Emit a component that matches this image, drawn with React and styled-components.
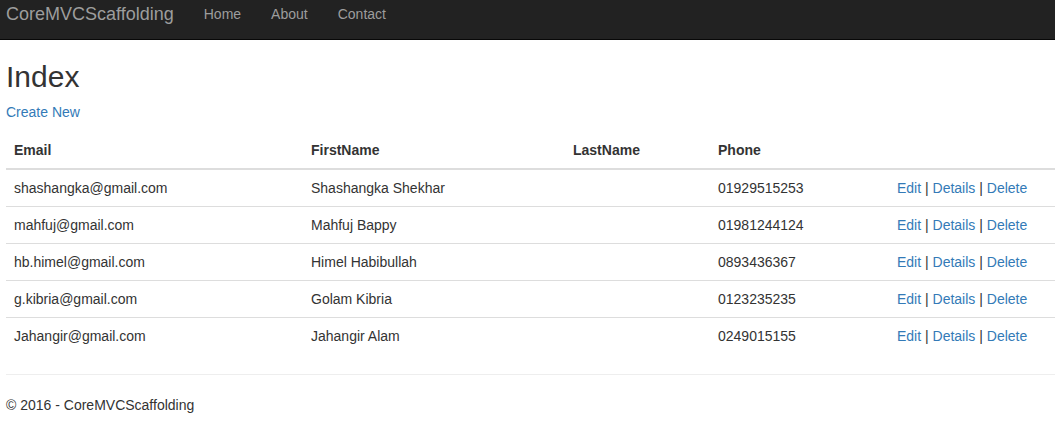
import styled, { createGlobalStyle } from "styled-components";

const GlobalStyle = createGlobalStyle`
    * { box-sizing: border-box; }
    html, body { margin: 0; padding: 0; }
    body {
        font-family: "Liberation Sans", Arial, Helvetica, sans-serif;
        font-size: 14px;
        line-height: 20px;
        color: #333333;
        background: #ffffff;
        overflow: hidden;
    }
`;

const people = [
    { email: "shashangka@gmail.com", first: "Shashangka Shekhar", last: "", phone: "01929515253" },
    { email: "mahfuj@gmail.com", first: "Mahfuj Bappy", last: "", phone: "01981244124" },
    { email: "hb.himel@gmail.com", first: "Himel Habibullah", last: "", phone: "0893436367" },
    { email: "g.kibria@gmail.com", first: "Golam Kibria", last: "", phone: "0123235235" },
    { email: "Jahangir@gmail.com", first: "Jahangir Alam", last: "", phone: "0249015155" },
];

export default function App() {
    return (
        <>
            <GlobalStyle />
            <Navbar>
                <Brand href="#">CoreMVCScaffolding</Brand>
                <NavLink href="#">Home</NavLink>
                <NavLink href="#">About</NavLink>
                <NavLink href="#">Contact</NavLink>
            </Navbar>
            <Content>
                <Title>Index</Title>
                <Para>
                    <Link href="#">Create New</Link>
                </Para>
                <Table>
                    <colgroup>
                        <col style={{ width: 297 }} />
                        <col style={{ width: 262 }} />
                        <col style={{ width: 145 }} />
                        <col style={{ width: 179 }} />
                        <col />
                    </colgroup>
                    <thead>
                        <tr>
                            <Th>Email</Th>
                            <Th>FirstName</Th>
                            <Th>LastName</Th>
                            <Th>Phone</Th>
                            <Th></Th>
                        </tr>
                    </thead>
                    <tbody>
                        {people.map((p) => (
                            <tr key={p.email}>
                                <Td>{p.email}</Td>
                                <Td>{p.first}</Td>
                                <Td>{p.last}</Td>
                                <Td>{p.phone}</Td>
                                <Td>
                                    <Link href="#">Edit</Link> | <Link href="#">Details</Link> |{" "}
                                    <Link href="#">Delete</Link>
                                </Td>
                            </tr>
                        ))}
                    </tbody>
                </Table>
                <Rule />
                <Footer>
                    <Para>&copy; 2016 - CoreMVCScaffolding</Para>
                </Footer>
            </Content>
        </>
    );
}

const Navbar = styled.nav`
    display: flex;
    align-items: flex-start;
    height: 40px;
    background-color: #222222;
    border-bottom: 1px solid #080808;
    padding-left: 6px;
`;

const Brand = styled.a`
    font-size: 18px;
    line-height: 20px;
    color: #9d9d9d;
    text-decoration: none;
    padding: 4px 15px 0 0;
`;

const NavLink = styled.a`
    font-size: 14px;
    line-height: 20px;
    color: #9d9d9d;
    text-decoration: none;
    padding: 4px 15px 0 15px;
`;

const Content = styled.div`
    padding-left: 6px;
`;

const Title = styled.h2`
    font-size: 30px;
    font-weight: 500;
    line-height: 1.1;
    margin: 20px 0 9px 0;
`;

const Para = styled.p`
    margin: 0 0 10px 0;
`;

const Link = styled.a`
    color: #337ab7;
    text-decoration: none;
`;

const Table = styled.table`
    width: 1049px;
    table-layout: fixed;
    border-collapse: collapse;
    border-spacing: 0;
    margin-bottom: 20px;
`;

const Th = styled.th`
    text-align: left;
    font-weight: bold;
    padding: 8px;
    line-height: 20px;
    border-bottom: 2px solid #dddddd;
    vertical-align: bottom;
    white-space: nowrap;
`;

const Td = styled.td`
    padding: 8px;
    line-height: 20px;
    border-top: 1px solid #dddddd;
    vertical-align: top;
    white-space: nowrap;
`;

const Rule = styled.hr`
    margin: 20px 0;
    border: 0;
    border-top: 1px solid #eeeeee;
`;

const Footer = styled.footer``;
